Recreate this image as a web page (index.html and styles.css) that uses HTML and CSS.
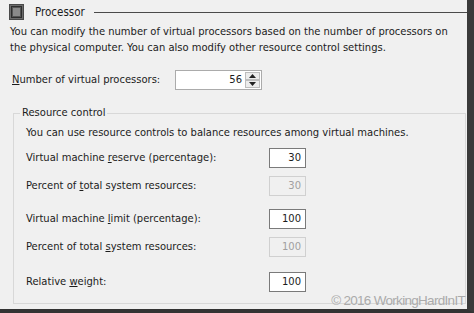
FILE: index.html
```html
<!DOCTYPE html>
<html>
<head>
<meta charset="utf-8">
<link rel="stylesheet" href="styles.css">
</head>
<body>
<div class="frame">
  <div class="header">
    <svg class="chip" width="15" height="16" viewBox="0 0 15 16">
      <rect x="0.5" y="0.5" width="14" height="15" fill="#6b6b6b" stroke="#4a4a4a"/>
      <rect x="2" y="2" width="11" height="12" fill="#2e2e2e"/>
      <rect x="3.5" y="3.5" width="8" height="9" fill="#8a8a8a" stroke="#555"/>
    </svg>
    <span class="title">Processor</span>
    <div class="rule"></div>
  </div>
  <p class="intro">You can modify the number of virtual processors based on the number of processors on the physical computer. You can also modify other resource control settings.</p>
  <div class="proc-row">
    <span class="proc-label"><u>N</u>umber of virtual processors:</span>
    <div class="spin">
      <div class="spin-value">56</div>
      <div class="spin-buttons">
        <div class="spin-btn"><svg width="7" height="4" viewBox="0 0 7 4"><path d="M0 4 L3.5 0 L7 4 Z" fill="#222"/></svg></div>
        <div class="spin-btn"><svg width="7" height="4" viewBox="0 0 7 4"><path d="M0 0 L3.5 4 L7 0 Z" fill="#222"/></svg></div>
      </div>
    </div>
  </div>
  <fieldset class="group">
    <legend>Resource control</legend>
    <p class="group-intro">You can use resource controls to balance resources among virtual machines.</p>
    <div class="row r1">
      <span class="label">Virtual machine <u>r</u>eserve (percentage):</span>
      <div class="field">30</div>
    </div>
    <div class="row r2">
      <span class="label">Percent of <u>t</u>otal system resources:</span>
      <div class="field disabled">30</div>
    </div>
    <div class="row r3">
      <span class="label">Virtual machine <u>l</u>imit (percentage):</span>
      <div class="field">100</div>
    </div>
    <div class="row r2">
      <span class="label">Percent of total <u>s</u>ystem resources:</span>
      <div class="field disabled">100</div>
    </div>
    <div class="row r5">
      <span class="label">Relative <u>w</u>eight:</span>
      <div class="field">100</div>
    </div>
  </fieldset>
  <div class="watermark">© 2016 WorkingHardInIT</div>
</div>
</body>
</html>
```
FILE: styles.css
```css
html, body {
  margin: 0;
  padding: 0;
  background: #f0f0f0;
}
.frame {
  position: relative;
  width: 474px;
  height: 313px;
  box-sizing: border-box;
  border-right: 7px solid #3a3a3a;
  border-bottom: 4px solid #333;
  background: #f0f0f0;
  font-family: "DejaVu Sans Condensed", "Liberation Sans", Arial, sans-serif;
  font-size: 11.1px;
  line-height: 16px;
  color: #1c1c1c;
  overflow: hidden;
}
.header {
  display: flex;
  align-items: center;
  height: 24px;
  padding-left: 9px;
}
.chip { display: block; }
.title {
  margin-left: 11px;
  font-size: 11.5px;
}
.rule {
  flex: 1;
  height: 1px;
  background: #4a4a4a;
  margin-left: 9px;
  margin-right: 0;
}
.intro {
  margin: 0;
  padding: 0 6px 0 10px;
}
.proc-row {
  display: flex;
  align-items: center;
  margin-top: 14px;
  padding-left: 12px;
}
.proc-label { width: 163px; }
.spin {
  display: flex;
  height: 20px;
  width: 87px;
  box-sizing: border-box;
  border: 1px solid #ababab;
  background: #fff;
}
.spin-value {
  flex: 1;
  text-align: right;
  padding-right: 3px;
  line-height: 18px;
}
.spin-buttons {
  display: flex;
  flex-direction: column;
  width: 16px;
  padding: 1px 1px 1px 0;
  box-sizing: border-box;
}
.spin-btn {
  flex: 1;
  display: flex;
  align-items: center;
  justify-content: center;
  background: #ececec;
  border: 1px solid #bdbdbd;
}
.group {
  margin: 15px 1px 0 13px;
  padding: 4px 0 0 12px;
  border: 1px solid #d8d8d8;
  height: 199px;
  box-sizing: border-box;
}
.group legend {
  padding: 0 2px;
  margin-left: -6px;
}
.group-intro {
  margin: 0;
}
.row {
  display: flex;
  align-items: center;
  height: 20px;
}
.r1 { margin-top: 7px; }
.r2 { margin-top: 8px; }
.r3 { margin-top: 13px; }
.r5 { margin-top: 15px; }
.label { width: 243px; }
.field {
  width: 37px;
  height: 20px;
  box-sizing: border-box;
  border: 1px solid #7a7a7a;
  background: #fff;
  text-align: right;
  padding-right: 4px;
  line-height: 18px;
}
.field.disabled {
  border-color: #d0d0d0;
  background: #f0f0f0;
  color: #a0a0a0;
}
.watermark {
  position: absolute;
  right: 2px;
  bottom: 0;
  font-family: "Liberation Sans", Arial, sans-serif;
  font-size: 13.5px;
  letter-spacing: -0.7px;
  line-height: 16px;
  color: #ababab;
}
```
